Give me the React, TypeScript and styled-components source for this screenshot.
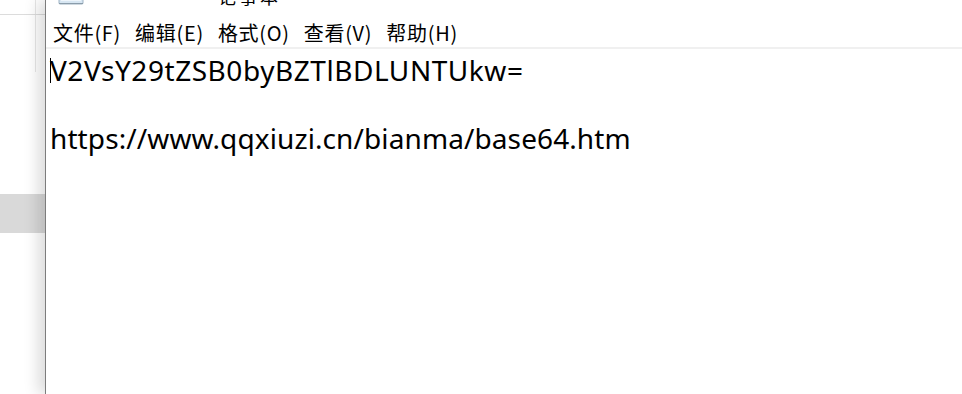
import * as React from "react";
import styled, { createGlobalStyle } from "styled-components";

const GlobalStyle = createGlobalStyle`
  html, body {
    margin: 0;
    padding: 0;
    background: #ffffff;
    overflow: hidden;
  }
  #root {
    width: 962px;
    height: 394px;
  }
`;

const Screen = styled.div`
  display: flex;
  width: 962px;
  height: 394px;
  overflow: hidden;
  background: #ffffff;
`;

/* the window behind notepad, only its right edge is visible */
const BackPane = styled.div`
  width: 45px;
  flex-shrink: 0;
  display: flex;
  flex-direction: column;
  background: #ffffff;
`;

const BackHeader = styled.div`
  width: 36px;
  height: 72px;
  border-right: 1px solid #e6e6e6;
  box-sizing: border-box;
`;

const BackHeaderRow = styled.div`
  height: 14px;
  width: 45px;
  border-bottom: 1px solid #dcdcdc;
`;

const BackSelected = styled.div`
  margin-top: 122px;
  height: 39px;
  background: #d9d9d9;
`;

const NotepadWindow = styled.div`
  position: relative;
  z-index: 1;
  flex: 1;
  display: flex;
  flex-direction: column;
  border-left: 1px solid #7c7c7c;
  background: #ffffff;
  box-shadow: -7px 0 14px rgba(0, 0, 0, 0.14);
`;

const TitleBar = styled.div`
  height: 19px;
  overflow: hidden;
  display: flex;
  align-items: flex-end;
  padding: 0 0 14px 12px;
  box-sizing: border-box;
  font-family: "Noto Sans CJK SC", "Noto Sans", sans-serif;
  font-size: 18px;
`;

const AppIcon = styled.svg`
  width: 26px;
  height: 24px;
  flex-shrink: 0;
`;

const TitleText = styled.span`
  margin-left: 134px;
  line-height: 18px;
  color: #000;
  letter-spacing: 3px;
`;

const MenuBar = styled.div`
  height: 30px;
  display: flex;
  align-items: center;
  padding-bottom: 2px;
  box-sizing: border-box;
  border-bottom: 2px solid #f0f0f0;
`;

const MenuItem = styled.span`
  padding: 0 7px;
  font-family: "Noto Sans CJK SC", "Noto Sans", sans-serif;
  font-size: 20px;
  letter-spacing: 0.7px;
  color: #000;
  white-space: nowrap;
`;

const Editor = styled.div`
  flex: 1;
  padding: 4px 0 0 4px;
  font-family: "Noto Sans", "Noto Sans CJK SC", sans-serif;
  font-size: 28px;
  line-height: 34px;
  color: #000;
`;

const Line = styled.div<{ $tracking?: number }>`
  position: relative;
  height: 34px;
  white-space: pre;
  letter-spacing: ${(p) => p.$tracking ?? 0}px;
`;

const Caret = styled.span`
  position: absolute;
  left: 0;
  top: 5px;
  width: 1px;
  height: 25px;
  background: #000;
`;

const menus = ["文件(F)", "编辑(E)", "格式(O)", "查看(V)", "帮助(H)"];

const lines = [
  { text: "V2VsY29tZSB0byBZTlBDLUNTUkw=", tracking: 0.55 },
  { text: "", tracking: 0 },
  { text: "https://www.qqxiuzi.cn/bianma/base64.htm", tracking: 0.1 },
];

export default function App() {
  return (
    <>
      <GlobalStyle />
      <Screen>
        <BackPane>
          <BackHeader>
            <BackHeaderRow />
          </BackHeader>
          <BackSelected />
        </BackPane>
        <NotepadWindow>
          <TitleBar>
            <AppIcon viewBox="0 0 26 24">
              <rect x="1" y="1" width="24" height="22" rx="1" fill="#d7e6f2" stroke="#9fb3c4" />
              <rect x="3" y="4" width="20" height="16" fill="#eef5fb" />
              <line x1="1" y1="22.5" x2="25" y2="22.5" stroke="#8a9caa" />
            </AppIcon>
            <TitleText>记事本</TitleText>
          </TitleBar>
          <MenuBar>
            {menus.map((m) => (
              <MenuItem key={m}>{m}</MenuItem>
            ))}
          </MenuBar>
          <Editor>
            {lines.map((l, i) => (
              <Line key={i} $tracking={l.tracking}>
                {i === 0 && <Caret />}
                {l.text}
              </Line>
            ))}
          </Editor>
        </NotepadWindow>
      </Screen>
    </>
  );
}
